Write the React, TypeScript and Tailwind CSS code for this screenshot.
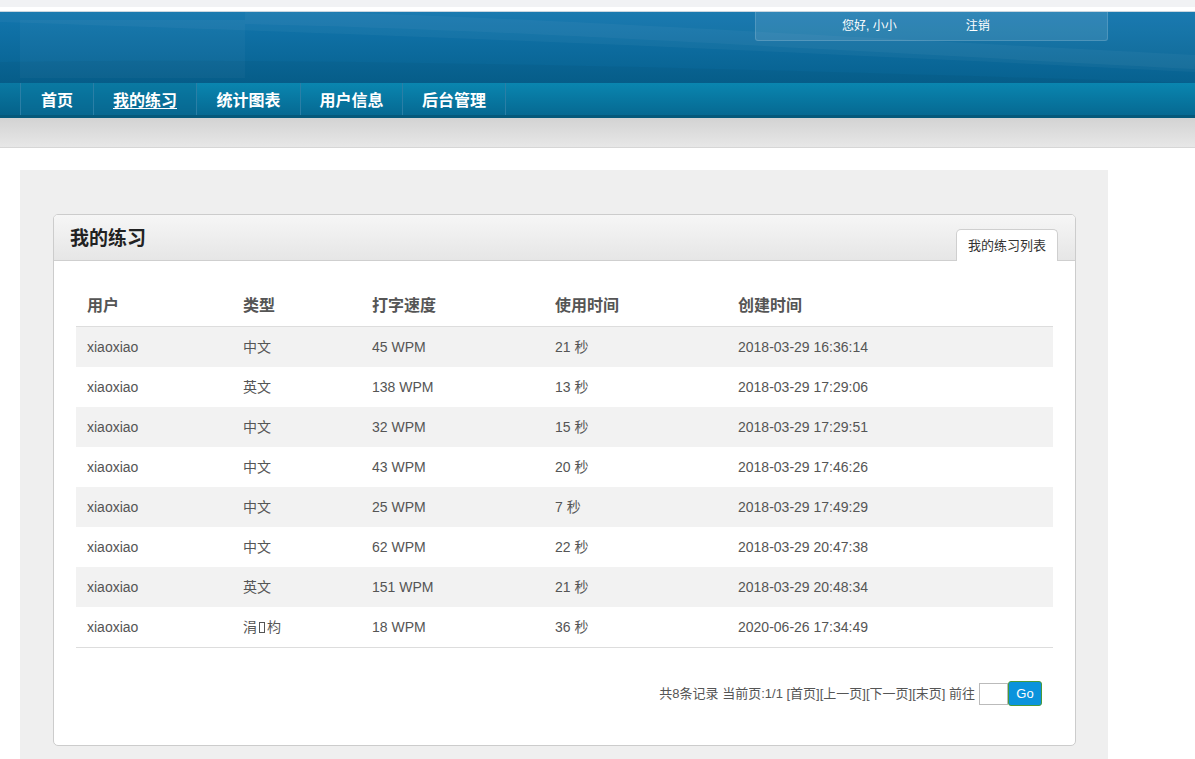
import React from "react";

const rows = [
  ["xiaoxiao", "中文", "45 WPM", "21 秒", "2018-03-29 16:36:14"],
  ["xiaoxiao", "英文", "138 WPM", "13 秒", "2018-03-29 17:29:06"],
  ["xiaoxiao", "中文", "32 WPM", "15 秒", "2018-03-29 17:29:51"],
  ["xiaoxiao", "中文", "43 WPM", "20 秒", "2018-03-29 17:46:26"],
  ["xiaoxiao", "中文", "25 WPM", "7 秒", "2018-03-29 17:49:29"],
  ["xiaoxiao", "中文", "62 WPM", "22 秒", "2018-03-29 20:47:38"],
  ["xiaoxiao", "英文", "151 WPM", "21 秒", "2018-03-29 20:48:34"],
  ["xiaoxiao", "MOJI", "18 WPM", "36 秒", "2020-06-26 17:34:49"],
];

const navItems = ["首页", "我的练习", "统计图表", "用户信息", "后台管理"];
const navWidths = ["w-[73px]", "w-[103px]", "w-[104px]", "w-[102px]", "w-[104px]"];

const cols = ["w-[156px]", "w-[129px]", "w-[183px]", "w-[183px]", "flex-1"];

export default function App() {
  return (
    <div
      className="w-[1195px] h-[759px] overflow-hidden bg-white"
      style={{ fontFamily: '"Liberation Sans", Arial, "Noto Sans CJK SC", sans-serif' }}
    >
      {/* top strip */}
      <div className="h-[7px] bg-[#f1f2f4]" />
      <div className="h-[4px] bg-white" />
      <div className="h-[1px] bg-[#c9d6e0]" />
      {/* blue header */}
      <div className="relative h-[71px] bg-gradient-to-b from-[#1276ae] to-[#07618f] overflow-hidden">
        <svg className="absolute inset-0" width="1195" height="71" viewBox="0 0 1195 71">
          <rect x="20" y="8" width="225" height="58" fill="#ffffff" opacity="0.03" />
          <path d="M0 10 C 300 20, 600 30, 1195 60 L1195 0 L0 0 Z" fill="#ffffff" opacity="0.035" />
          <path d="M0 50 C 300 45, 700 55, 1195 71 L0 71 Z" fill="#000000" opacity="0.035" />
          <path d="M245 5 C 500 10, 800 30, 1195 50" stroke="#ffffff" strokeOpacity="0.035" strokeWidth="14" fill="none" />
        </svg>
        <div className="absolute left-[755px] top-0 w-[353px] h-[29px] bg-white/10 border border-white/15 border-t-0 rounded-b-[3px] flex items-center text-white text-[12px]">
          <span className="ml-[86px]">您好, 小小</span>
          <span className="ml-[69px]">注销</span>
        </div>
      </div>
      {/* nav */}
      <div className="h-[35px] flex bg-gradient-to-b from-[#0a86b0] to-[#066992] border-b-[3px] border-[#05597b]">
        <div className="w-[20px] bg-gradient-to-b from-[#0a79a3] to-[#05628a]" />
        {navItems.map((n, i) => (
          <div
            key={n}
            className={`${navWidths[i]} h-full flex items-center justify-center border-l border-[#2a7fa6] text-white font-bold text-[16px] ${i === 4 ? "border-r" : ""} ${i < 2 ? "bg-[#09668f]/40" : ""}`}
            style={{ fontFamily: '"Noto Sans CJK SC", sans-serif' }}
          >
            <span className={i === 1 ? "underline underline-offset-2" : ""}>{n}</span>
          </div>
        ))}
      </div>
      {/* gray band */}
      <div className="h-[30px] bg-gradient-to-b from-[#d3d3d3] to-[#e7e7e7] border-b border-[#d6d6d6]" />
      {/* main */}
      <div className="pt-[22px] pl-[20px]">
        <div className="w-[1088px] h-[600px] bg-[#efefef] pt-[44px] pl-[33px]">
          <div className="w-[1023px] h-[532px] bg-white border border-[#cccccc] rounded-[5px] overflow-hidden">
            {/* card header */}
            <div className="h-[46px] bg-gradient-to-b from-[#f6f6f6] to-[#e6e6e6] border-b border-[#cfcfcf] flex items-end justify-between">
              <div className="self-center pl-[16px] text-[19px] font-bold text-[#222]" style={{ fontFamily: '"Noto Sans CJK SC", sans-serif' }}>
                我的练习
              </div>
              <div className="mr-[17px] mb-[-1px] w-[102px] h-[32px] bg-white border border-[#cfcfcf] border-b-0 rounded-t-[5px] flex items-center justify-center text-[13px] text-[#333]">
                我的练习列表
              </div>
            </div>
            {/* table */}
            <div className="pl-[22px] pr-[22px] pt-[22px]">
              <div className="flex h-[44px] items-center border-b border-[#dddddd] text-[16px] font-bold text-[#555]" style={{ fontFamily: '"Noto Sans CJK SC", sans-serif' }}>
                {["用户", "类型", "打字速度", "使用时间", "创建时间"].map((h, i) => (
                  <div key={h} className={`${cols[i]} pl-[11px] pb-[1px]`}>{h}</div>
                ))}
              </div>
              <div className="border-b border-[#dddddd]">
                {rows.map((r, ri) => (
                  <div key={ri} className={`flex h-[40px] items-center text-[14px] text-[#555] ${ri % 2 === 0 ? "bg-[#f2f2f2]" : "bg-white"}`}>
                    {r.map((c, i) => (
                      <div key={i} className={`${cols[i]} pl-[11px]`}>
                        {c === "MOJI" ? (
                          <span className="inline-flex items-center">
                            涓<span className="inline-block w-[6px] h-[11px] border border-[#555] mx-[2px]" />枃
                          </span>
                        ) : (
                          c
                        )}
                      </div>
                    ))}
                  </div>
                ))}
              </div>
              {/* pagination */}
              <div className="flex justify-end items-center mt-[33px] pr-[11px] text-[13px] text-[#555]">
                <span>共8条记录 当前页:1/1 [首页][上一页][下一页][末页] 前往</span>
                <div className="ml-[4px] w-[29px] h-[22px] border border-[#bbbbbb] bg-white" />
                <div className="w-[34px] h-[25px] bg-[#0a93dc] border border-[#4a9a3a] rounded-[3px] text-white text-[13px] flex items-center justify-center">
                  Go
                </div>
              </div>
            </div>
          </div>
        </div>
      </div>
    </div>
  );
}
